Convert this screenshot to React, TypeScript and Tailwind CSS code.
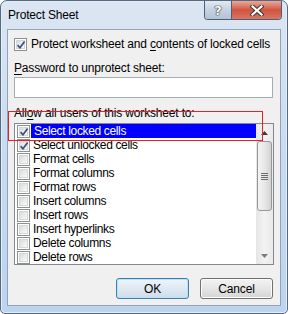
import React from 'react';

const items = [
  { label: 'Select locked cells', checked: true, selected: true },
  { label: 'Select unlocked cells', checked: true },
  { label: 'Format cells' },
  { label: 'Format columns' },
  { label: 'Format rows' },
  { label: 'Insert columns' },
  { label: 'Insert rows' },
  { label: 'Insert hyperlinks' },
  { label: 'Delete columns' },
  { label: 'Delete rows' },
];

function CheckBox({ checked }: { checked?: boolean }) {
  return (
    <span className="relative flex w-[13px] h-[13px] shrink-0 border border-[#8e8f8f] bg-white p-[1px]">
      <span className="flex-1 border border-[#d6d6d6] bg-gradient-to-br from-[#d9dbde] to-[#fafafa]" />
      {checked && (
        <svg className="absolute left-[1px] top-[1px]" width="10" height="10" viewBox="0 0 10 10">
          <path d="M1.6 5.2 L4 7.8 L8.6 1.6" fill="none" stroke="#3d4f87" strokeWidth="1.7" strokeLinejoin="round" />
        </svg>
      )}
    </span>
  );
}

function Scrollbar() {
  return (
    <div className="flex flex-col w-[17px] shrink-0 bg-gradient-to-r from-[#e6e6e6] via-[#f2f2f2] to-[#e9e9e9]">
      <div className="h-[17px] flex items-center justify-center">
        <svg width="7" height="4" viewBox="0 0 7 4"><path d="M0 4 L3.5 0 L7 4 Z" fill="#3c3c3c" /></svg>
      </div>
      <div className="mx-[1px] h-[70px] rounded-[3px] border border-[#979797] bg-gradient-to-r from-[#f4f4f4] via-[#e8e8e8] to-[#d2d2d2] flex flex-col items-center justify-center gap-[1px]">
        <span className="w-[7px] h-[1px] bg-[#6b6b6b]" />
        <span className="w-[7px] h-[1px] bg-[#6b6b6b]" />
        <span className="w-[7px] h-[1px] bg-[#6b6b6b]" />
        <span className="w-[7px] h-[1px] bg-[#6b6b6b]" />
      </div>
      <div className="flex-1" />
      <div className="h-[17px] flex items-center justify-center">
        <svg width="7" height="4" viewBox="0 0 7 4"><path d="M0 0 L7 0 L3.5 4 Z" fill="#7c7c7c" /></svg>
      </div>
    </div>
  );
}

export default function App() {
  return (
    <div className="relative w-[288px] h-[314px] flex flex-col overflow-hidden rounded-t-[7px] rounded-b-[5px] border border-[#55697f] bg-gradient-to-b from-[#dce6f2] via-[#c8dbf0] to-[#bcd4ee] shadow-[inset_0_0_0_1px_#e4edf8] font-['Liberation_Sans',Arial,sans-serif] text-[12px] tracking-[-0.17px] text-black whitespace-nowrap select-none">
      {/* title bar */}
      <div className="h-[28px] flex items-start justify-between shrink-0">
        <span className="pl-[7px] pt-[5px] leading-[18px]">Protect Sheet</span>
        <div className="mr-[5px] flex h-[19px] rounded-b-[4px] border border-t-0 border-[#4e5e74] overflow-hidden">
          <div className="w-[27px] flex items-center justify-center bg-gradient-to-b from-[#e2e9f1] via-[#c5d2e0] to-[#b3c3d5] border-r border-[#4e5e74]">
            <span className="font-['DejaVu_Sans',sans-serif] font-bold text-[13px] leading-none text-white [text-shadow:0_0_1px_#2a2a2a,0_0_1px_#2a2a2a,0_0_1px_#2a2a2a]">?</span>
          </div>
          <div className="w-[49px] flex items-center justify-center bg-gradient-to-b from-[#e9a99b] via-[#d0533e] to-[#d97661]">
            <svg width="14" height="11" viewBox="0 0 14 11">
              <path d="M2.5 1.5 L11.5 9.5 M11.5 1.5 L2.5 9.5" stroke="#3a3a3a" strokeWidth="4.2" strokeLinecap="square" fill="none" />
              <path d="M2.5 1.5 L11.5 9.5 M11.5 1.5 L2.5 9.5" stroke="#ffffff" strokeWidth="2.2" strokeLinecap="square" fill="none" />
            </svg>
          </div>
        </div>
      </div>

      {/* client area */}
      <div className="mx-[6px] mb-[7px] flex-1 flex flex-col border border-[#8fa3ba] bg-[#f0f0f0]">
        <div className="mt-[7px] ml-[6px] h-[14px] flex items-center gap-[4px]">
          <CheckBox checked />
          <span className="leading-[14px]">
            Protect worksheet and <span className="underline underline-offset-[2px]">c</span>ontents of locked cells
          </span>
        </div>

        <div className="mt-[9px] ml-[6px] leading-[16px]">
          <span className="underline underline-offset-[2px]">P</span>assword to unprotect sheet:
        </div>
        <div className="mt-[1px] ml-[6px] w-[259px] h-[21px] border border-[#a5acb5] bg-white" />

        <div className="mt-[7px] ml-[6px] leading-[16px]">
          All<span className="underline underline-offset-[2px]">o</span>w all users of this worksheet to:
        </div>

        <div className="mt-[2px] ml-[6px] w-[260px] h-[142px] flex border border-[#828790] bg-white">
          <div className="flex-1 flex flex-col tracking-[-0.35px]">
            {items.map((it) => (
              <div key={it.label} className="h-[14px] flex items-center pl-[2px]">
                <CheckBox checked={it.checked} />
                <span
                  className={
                    it.selected
                      ? 'ml-[1px] flex-1 h-[14px] pl-[3px] leading-[14px] bg-[#0000ff] text-white'
                      : 'ml-[1px] flex-1 h-[14px] pl-[2px] leading-[14px]'
                  }
                >
                  {it.label}
                </span>
              </div>
            ))}
          </div>
          <Scrollbar />
        </div>

        <div className="mt-[13px] mr-[7px] flex justify-end gap-[11px]">
          <button className="w-[73px] h-[21px] rounded-[3px] border border-[#3c7fb1] bg-gradient-to-b from-[#eef4f9] via-[#dfe9f2] to-[#cfdce8] shadow-[inset_0_0_0_1px_#b8e2f7] leading-[18px]">
            OK
          </button>
          <button className="w-[73px] h-[21px] rounded-[3px] border border-[#707070] bg-gradient-to-b from-[#f3f3f3] via-[#e6e6e6] to-[#d4d4d4] shadow-[inset_0_0_0_1px_#fcfcfc] leading-[18px]">
            Cancel
          </button>
        </div>
      </div>

      {/* red annotation box */}
      <div className="absolute left-[7px] top-[110px] w-[255px] h-[30px] border border-[#e3222e] pointer-events-none" />
    </div>
  );
}
